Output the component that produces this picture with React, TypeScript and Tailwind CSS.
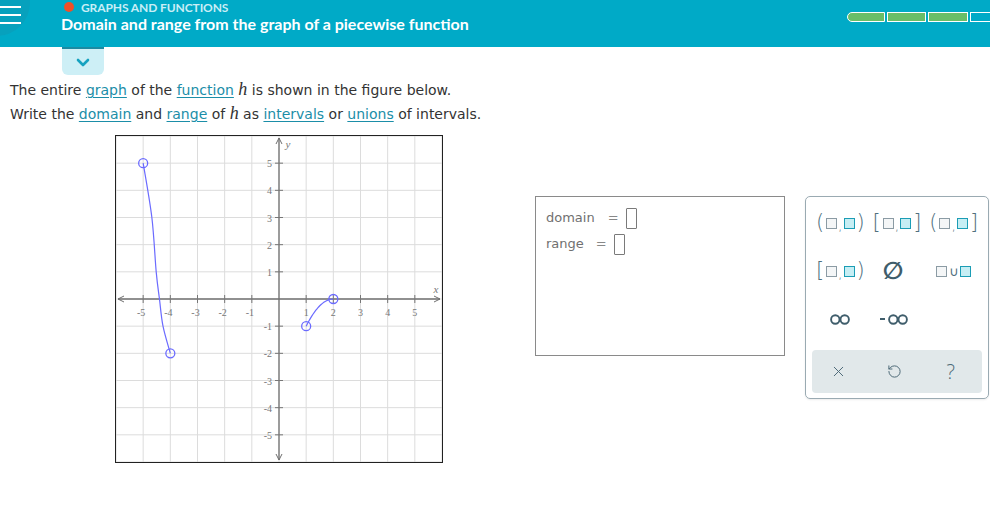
import React from "react";
import { X, RotateCcw } from "lucide-react";

const U = 326 / 12;
const O = 163;
const px = (x: number) => O + x * U;
const py = (y: number) => O - y * U;

function catmull(pts: [number, number][]) {
  const p = pts.map(([x, y]) => [px(x), py(y)]);
  let d = `M${p[0][0]},${p[0][1]}`;
  for (let i = 0; i < p.length - 1; i++) {
    const p0 = p[i - 1] || p[i];
    const p1 = p[i];
    const p2 = p[i + 1];
    const p3 = p[i + 2] || p2;
    const c1x = p1[0] + (p2[0] - p0[0]) / 6;
    const c1y = p1[1] + (p2[1] - p0[1]) / 6;
    const c2x = p2[0] - (p3[0] - p1[0]) / 6;
    const c2y = p2[1] - (p3[1] - p1[1]) / 6;
    d += ` C${c1x},${c1y} ${c2x},${c2y} ${p2[0]},${p2[1]}`;
  }
  return d;
}

function Graph() {
  const lines = [];
  for (let i = -6; i <= 6; i++) {
    lines.push(<line key={"v" + i} x1={px(i)} y1={0} x2={px(i)} y2={326} stroke="#dcdcdc" strokeWidth={1} />);
    lines.push(<line key={"h" + i} x1={0} y1={py(i)} x2={326} y2={py(i)} stroke="#dcdcdc" strokeWidth={1} />);
  }
  const ticks = [];
  for (let i = -5; i <= 5; i++) {
    if (i === 0) continue;
    ticks.push(<line key={"tx" + i} x1={px(i)} y1={O - 4} x2={px(i)} y2={O + 4} stroke="#777" strokeWidth={1} />);
    ticks.push(<line key={"ty" + i} x1={O - 4} y1={py(i)} x2={O + 4} y2={py(i)} stroke="#777" strokeWidth={1} />);
    ticks.push(
      <text key={"lx" + i} x={px(i) - (i < 0 ? 2 : 0)} y={O + 17} fontSize={10} fill="#777" textAnchor="middle" fontFamily="'Liberation Serif', serif">
        {i}
      </text>
    );
    ticks.push(
      <text key={"ly" + i} x={O - 7} y={py(i) + 4} fontSize={10} fill="#777" textAnchor="end" fontFamily="'Liberation Serif', serif">
        {i}
      </text>
    );
  }
  const c1 = catmull([
    [-5, 5],
    [-4.68, 3],
    [-4.52, 1],
    [-4.4, 0],
    [-4.27, -1],
    [-4, -2],
  ]);
  const s2: string[] = [];
  for (let k = 0; k <= 20; k++) {
    const x = 1 + k / 20;
    const y = -((x - 2) * (x - 2));
    s2.push(`${px(x)},${py(y)}`);
  }
  const blue = "#6b6bff";
  return (
    <svg width={326} height={326} className="block">
      {lines}
      <line x1={2} y1={O} x2={324} y2={O} stroke="#707070" strokeWidth={1.3} />
      <line x1={O} y1={2} x2={O} y2={324} stroke="#707070" strokeWidth={1.3} />
      <polyline points={`8,${O - 3} 2,${O} 8,${O + 3}`} fill="none" stroke="#707070" strokeWidth={1} />
      <polyline points={`318,${O - 3} 324,${O} 318,${O + 3}`} fill="none" stroke="#707070" strokeWidth={1} />
      <polyline points={`${O - 3},8 ${O},2 ${O + 3},8`} fill="none" stroke="#707070" strokeWidth={1} />
      <polyline points={`${O - 3},318 ${O},324 ${O + 3},318`} fill="none" stroke="#707070" strokeWidth={1} />
      {ticks}
      <text x={320} y={O - 6} fontSize={11} fill="#777" textAnchor="middle" fontStyle="italic" fontFamily="'Liberation Serif', serif">
        x
      </text>
      <text x={O + 9} y={12} fontSize={11} fill="#777" textAnchor="middle" fontStyle="italic" fontFamily="'Liberation Serif', serif">
        y
      </text>
      <path d={c1} fill="none" stroke={blue} strokeWidth={1.2} />
      <polyline points={s2.join(" ")} fill="none" stroke={blue} strokeWidth={1.2} />
      {[
        [-5, 5],
        [-4, -2],
        [1, -1],
        [2, 0],
      ].map(([x, y], i) => (
        <circle key={i} cx={px(x)} cy={py(y)} r={4.5} fill="none" stroke={blue} strokeWidth={1.3} />
      ))}
    </svg>
  );
}

function Sq({ on }: { on?: boolean }) {
  return (
    <span
      className={
        on
          ? "inline-block w-[11px] h-[11px] border-[1.5px] border-[#1b9db5] bg-[#c6eef4]"
          : "inline-block w-[11px] h-[11px] border-[1.5px] border-[#8b9ba4] bg-[#f4f6f7]"
      }
    />
  );
}

function Interval({ l, r }: { l: string; r: string }) {
  return (
    <span className="flex items-center text-[#50707e] text-[21px] leading-none" style={{ fontFamily: "'DejaVu Sans', sans-serif", fontWeight: 300 }}>
      <span className="mr-[2px] -mt-[2px]">{l}</span>
      <Sq />
      <span className="text-[14px] mx-[1px] mt-[4px]">,</span>
      <Sq on />
      <span className="ml-[2px] -mt-[2px]">{r}</span>
    </span>
  );
}

function Inf() {
  return (
    <svg width="20" height="11" viewBox="0 0 20 11" className="block">
      <circle cx="5.3" cy="5.5" r="4.2" fill="none" stroke="#3f5d6b" strokeWidth="1.9" />
      <circle cx="14.7" cy="5.5" r="4.2" fill="none" stroke="#3f5d6b" strokeWidth="1.9" />
    </svg>
  );
}

function Key({ children }: { children: React.ReactNode }) {
  return <div className="h-[48px] flex items-center justify-center">{children}</div>;
}

function Link({ children }: { children: React.ReactNode }) {
  return <span className="text-[#1b8ea8] underline underline-offset-2 decoration-1">{children}</span>;
}

function H() {
  return (
    <span className="italic text-[18px] text-[#333]" style={{ fontFamily: "'Liberation Serif', serif" }}>
      h
    </span>
  );
}

export default function App() {
  return (
    <div className="w-[990px] h-[532px] bg-white overflow-hidden relative" style={{ fontFamily: "'DejaVu Sans', Verdana, sans-serif" }}>
      {/* header */}
      <div className="relative h-[47px] bg-[#00aac7] flex overflow-hidden">
        <div className="absolute -left-[37px] -top-[31px] w-[67px] h-[67px] rounded-full bg-[#07a1bd]" />
        <div className="relative w-[61px] flex flex-col gap-[6px] pt-[6px]">
          <div className="w-[21px] h-[2px] bg-white" />
          <div className="w-[21px] h-[2px] bg-white" />
          <div className="w-[21px] h-[2px] bg-white" />
        </div>
        <div className="flex flex-col" style={{ fontFamily: "Lato, 'Open Sans', sans-serif" }}>
          <div className="flex items-center h-[13px] pt-[1px]">
            <span className="w-[10px] h-[10px] rounded-full bg-[#f04f27] ml-[3px]" />
            <span className="ml-[7px] text-[12px] font-bold text-[#c9eef6] tracking-[-0.1px] leading-[13px]">GRAPHS AND FUNCTIONS</span>
          </div>
          <div className="mt-[2px] text-[16px] font-bold text-white leading-[18px] tracking-[0px]">
            Domain and range from the graph of a piecewise function
          </div>
        </div>
        <div className="ml-auto flex items-start pt-[12px] gap-[2px] -mr-[20px]">
          <div className="w-[38px] h-[10px] bg-[#69be68] border border-white rounded-l-full" />
          <div className="w-[39px] h-[10px] bg-[#69be68] border border-white" />
          <div className="w-[40px] h-[10px] bg-[#69be68] border border-white" />
          <div className="w-[40px] h-[10px] border border-white" />
        </div>
      </div>
      {/* tab */}
      <div className="ml-[62px] w-[42px] h-[28px] bg-[#cdeff6] rounded-b-[6px] border-t-2 border-[#1b8aa2] flex items-center justify-center">
        <svg width="14" height="9" viewBox="0 0 14 9">
          <polyline points="2,2 7,7 12,2" fill="none" stroke="#16a2c0" strokeWidth="2.6" strokeLinecap="round" strokeLinejoin="round" />
        </svg>
      </div>
      {/* prompt */}
      <div className="pl-[10px] mt-[3px] text-[14px] text-[#333] leading-[23px]">
        <div>
          The entire <Link>graph</Link> of the <Link>function</Link> <H /> is shown in the figure below.
        </div>
        <div>
          Write the <Link>domain</Link> and <Link>range</Link> of <H /> as <Link>intervals</Link> or <Link>unions</Link> of intervals.
        </div>
      </div>
      {/* content row */}
      <div className="flex items-start mt-[9px]">
        <div className="ml-[115px] border border-[#222]">
          <Graph />
        </div>
        <div className="ml-[92px] mt-[61px] w-[250px] h-[160px] border border-[#8a8a8a] pt-[9px] pl-[10px] text-[13px] text-[#707070]">
          <div className="flex items-center h-[24px]">
            <span>domain</span>
            <span className="ml-[13px] text-[#888]">=</span>
            <span className="ml-[7px] w-[11px] h-[21px] border border-[#7a7a7a] rounded-[1px]" />
          </div>
          <div className="flex items-center h-[24px] mt-[2px]">
            <span>range</span>
            <span className="ml-[12px] text-[#888]">=</span>
            <span className="ml-[7px] w-[11px] h-[21px] border border-[#7a7a7a] rounded-[1px]" />
          </div>
        </div>
        <div className="ml-[20px] mt-[61px] w-[184px] h-[203px] border border-[#9aaab2] rounded-[5px] px-[6px] pt-[2px] shadow-[0_1px_2px_rgba(0,0,0,0.08)]">
          <div className="grid grid-cols-3">
            <Key>
              <Interval l="(" r=")" />
            </Key>
            <Key>
              <Interval l="[" r="]" />
            </Key>
            <Key>
              <Interval l="(" r="]" />
            </Key>
            <Key>
              <Interval l="[" r=")" />
            </Key>
            <Key>
              <span className="text-[24px] text-[#3f5d6b] font-bold leading-none -ml-[8px]" style={{ fontFamily: "'DejaVu Sans', sans-serif" }}>
                ∅
              </span>
            </Key>
            <Key>
              <span className="flex items-center gap-[2px] text-[#50707e] text-[13px]">
                <Sq />
                <span className="leading-none">∪</span>
                <Sq on />
              </span>
            </Key>
            <Key>
              <Inf />
            </Key>
            <Key>
              <span className="flex items-center -ml-[6px]">
                <span className="w-[5px] h-[2.5px] bg-[#3f5d6b] mr-[3px]" />
                <Inf />
              </span>
            </Key>
            <Key>{null}</Key>
          </div>
          <div className="mt-[7px] h-[43px] bg-[#e1e8ea] rounded-[4px] grid grid-cols-3 items-center text-[#4e6a78]">
            <div className="flex justify-center -ml-[3px]">
              <X size={17} strokeWidth={1.4} />
            </div>
            <div className="flex justify-center -ml-[4px]">
              <RotateCcw size={15} strokeWidth={1.6} />
            </div>
            <div className="flex justify-center -ml-[6px] text-[20px] font-light leading-none" style={{ fontFamily: "'Open Sans', sans-serif" }}>
              ?
            </div>
          </div>
        </div>
      </div>
    </div>
  );
}
